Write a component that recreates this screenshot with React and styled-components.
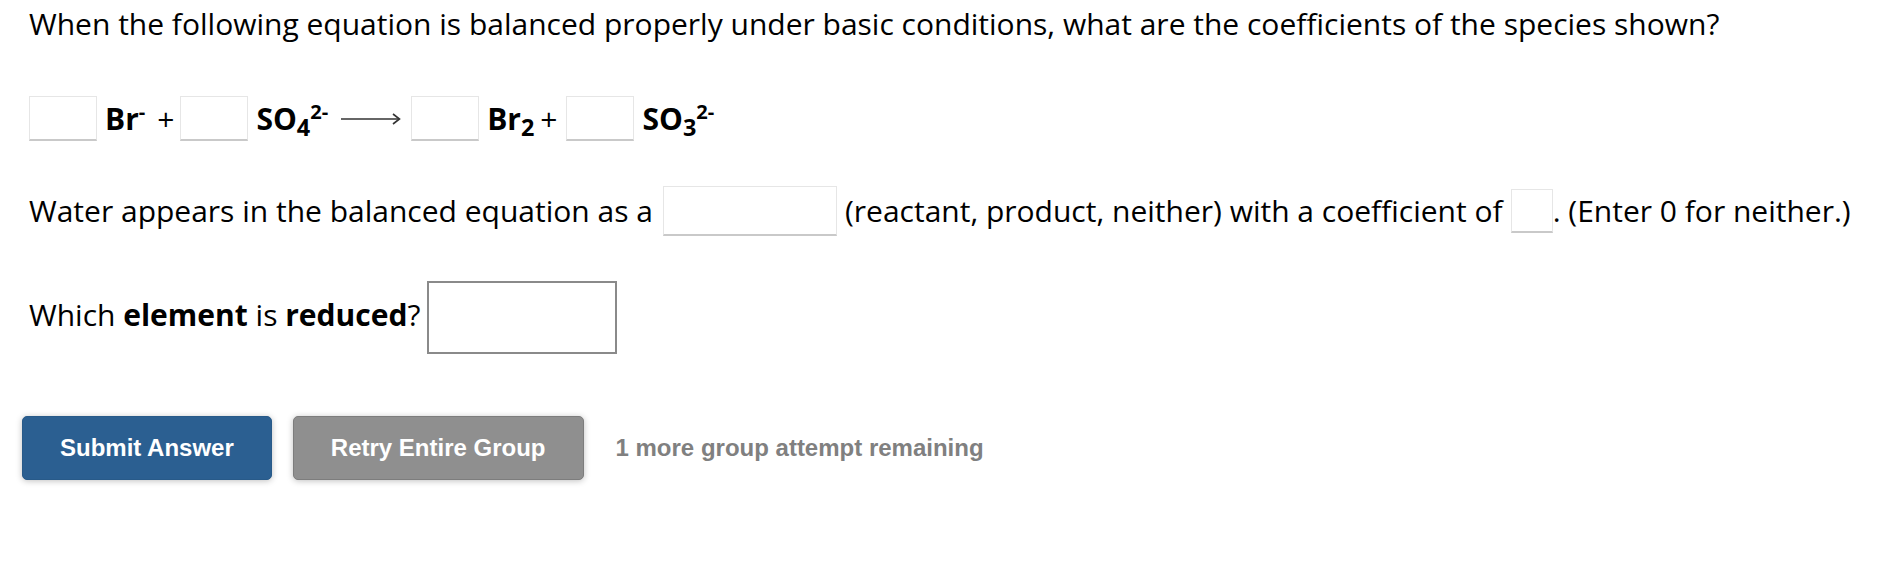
import React from "react";
import styled, { createGlobalStyle } from "styled-components";

const Global = createGlobalStyle`
  html, body { margin: 0; padding: 0; background: #fff; }
  body { font-family: "Open Sans", "Noto Sans", sans-serif; color: #000; }
`;

const Page = styled.div`
  width: 1892px;
  height: 582px;
  display: flex;
  flex-direction: column;
  font-size: 30px;
  line-height: 42px;
`;

const Heading = styled.p`
  margin: 3px 0 0 29px;
`;

const Row = styled.div`
  display: flex;
  align-items: center;
  margin: ${(p) => p.$top}px 0 0 29px;
  white-space: pre;
`;

const Blank = styled.span`
  display: inline-block;
  box-sizing: border-box;
  width: ${(p) => p.$w}px;
  height: ${(p) => p.$h}px;
  background: #fff;
  border: 1px solid #e6e6e6;
  border-bottom: 2px solid #c9c9c9;
  margin: 0 ${(p) => p.$mr ?? 0}px 0 ${(p) => p.$ml ?? 0}px;
  flex: none;
`;

const BigBlank = styled.span`
  display: inline-block;
  box-sizing: border-box;
  width: 190px;
  height: 73px;
  border: 2px solid #8a8a8a;
  margin-left: 7px;
  flex: none;
`;

const Species = styled.span`
  font-weight: 700;
  margin-left: 8px;
`;

const Sub = styled.sub`
  font-size: 0.78em;
  vertical-align: -0.25em;
  line-height: 0;
`;

const Sup = styled.sup`
  font-size: 0.67em;
  vertical-align: 0.55em;
  line-height: 0;
`;

const Plus = styled.span`
  margin: 0 ${(p) => p.$mr}px 0 ${(p) => p.$ml}px;
`;

const Arrow = styled.svg`
  width: 60px;
  height: 14px;
  margin: 0 10px 0 13px;
  flex: none;
`;

const Strong = styled.b`
  font-weight: 700;
`;

const Prompt = styled.span`
  margin-bottom: 6px;
`;

const ButtonRow = styled.div`
  display: flex;
  align-items: center;
  margin: 62px 0 0 22px;
  font-family: "Liberation Sans", Arial, sans-serif;
`;

const Button = styled.button`
  box-sizing: border-box;
  height: 64px;
  padding: 0 37px;
  margin-right: ${(p) => p.$mr}px;
  border-radius: 5px;
  border: 1px solid ${(p) => (p.$primary ? "#285a89" : "#7d7d7d")};
  background: ${(p) => (p.$primary ? "#2b5f91" : "#8f8f8f")};
  color: #fff;
  font-family: inherit;
  font-weight: 700;
  font-size: 24px;
  box-shadow: 0 1px 6px rgba(0, 0, 0, 0.25);
  cursor: pointer;
`;

const Remaining = styled.span`
  font-size: 24px;
  font-weight: 700;
  color: #808080;
`;

export default function App() {
  return (
    <Page>
      <Global />
      <Heading>
        When the following equation is balanced properly under basic conditions, what are the coefficients of the species shown?
      </Heading>
      <Row $top={51}>
        <Blank $w={68} $h={45} />
        <Species>
          Br<Sup>-</Sup>
        </Species>
        <Plus $ml={12} $mr={6}>+</Plus>
        <Blank $w={68} $h={45} />
        <Species>
          SO<Sub>4</Sub>
          <Sup>2-</Sup>
        </Species>
        <Arrow viewBox="0 0 60 14">
          <line x1="0" y1="7" x2="58" y2="7" stroke="#333" strokeWidth="1.6" />
          <polyline points="52,2 58.5,7 52,12" fill="none" stroke="#333" strokeWidth="1.6" />
        </Arrow>
        <Blank $w={68} $h={45} />
        <Species>
          Br<Sub>2</Sub>
        </Species>
        <Plus $ml={6} $mr={9}>+</Plus>
        <Blank $w={68} $h={45} />
        <Species>
          SO<Sub>3</Sub>
          <Sup>2-</Sup>
        </Species>
      </Row>
      <Row $top={45}>
        <span>Water appears in the balanced equation as a</span>
        <Blank $w={174} $h={50} $ml={10} $mr={8} />
        <span>(reactant, product, neither) with a coefficient of</span>
        <Blank $w={42} $h={44} $ml={8} />
        <span>. (Enter 0 for neither.)</span>
      </Row>
      <Row $top={45}>
        <Prompt>
          Which <Strong>element</Strong> is <Strong>reduced</Strong>?
        </Prompt>
        <BigBlank />
      </Row>
      <ButtonRow>
        <Button $primary $mr={21}>Submit Answer</Button>
        <Button $mr={32}>Retry Entire Group</Button>
        <Remaining>1 more group attempt remaining</Remaining>
      </ButtonRow>
    </Page>
  );
}
